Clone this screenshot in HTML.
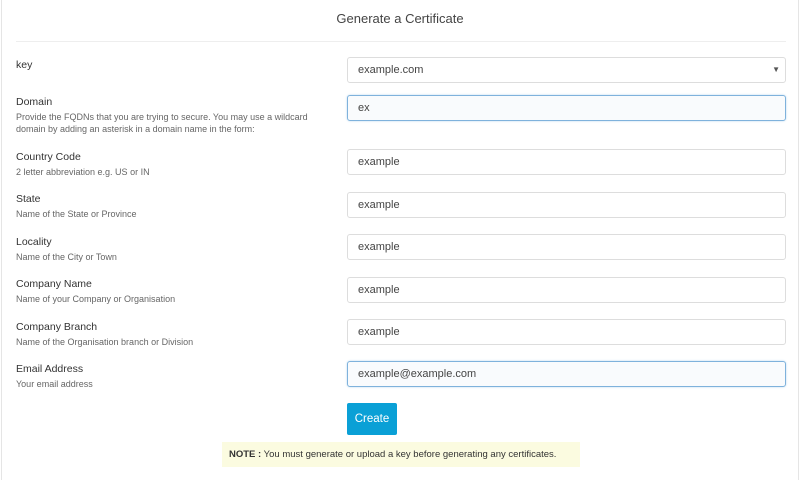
<!DOCTYPE html><html><head><style>
body{margin:0;width:800px;height:472px;background:#fff;font-family:"Liberation Sans",sans-serif;position:relative;overflow:hidden;color:#333}
.frame{position:absolute;left:1px;top:0;width:796px;height:480px;border-left:1px solid #e5e5e5;border-right:1px solid #e5e5e5}
.title{position:absolute;top:11px;left:0;width:800px;text-align:center;font-size:13px;color:#444}
.hr{position:absolute;top:41px;left:16px;width:770px;border-top:1px solid #eee}
.l{position:absolute;left:16px;font-size:10.5px;color:#333}
.d{position:absolute;left:16px;font-size:9px;color:#666;line-height:12px;width:320px}
.i{position:absolute;left:347px;height:24px;border:1px solid #ddd;border-radius:3px;font-size:11px;line-height:24px;padding-left:10px;box-sizing:content-box;width:427px;color:#444}
.f{border-color:#7fb2dc;background:#f9fbfd;box-shadow:0 0 2px #bcd8ee}
.btn{position:absolute;left:347px;top:403px;width:50px;height:32px;background:#0aa0d6;border-radius:2px;color:#fff;font-size:11.5px;line-height:32px;text-align:center}
.note{position:absolute;left:222px;top:442px;width:358px;height:25px;background:#fbfbe0;font-size:9.5px;line-height:25px;text-indent:7px;color:#333}
</style></head><body>
<div class="frame"></div>
<div class="title">Generate a Certificate</div>
<div class="hr"></div>
<div class="l" style="top:59px">key</div>
<div class="i" style="top:57px">example.com<span style="position:absolute;right:5px;font-size:8px;color:#555">▼</span></div>
<div class="l" style="top:96px">Domain</div>
<div class="d" style="top:111px">Provide the FQDNs that you are trying to secure. You may use a wildcard domain by adding an asterisk in a domain name in the form:</div>
<div class="i f" style="top:95px">ex</div>
<div class="l" style="top:151px">Country Code</div><div class="d" style="top:166px">2 letter abbreviation e.g. US or IN</div>
<div class="i" style="top:149px">example</div>
<div class="l" style="top:193px">State</div><div class="d" style="top:208px">Name of the State or Province</div>
<div class="i" style="top:192px">example</div>
<div class="l" style="top:236px">Locality</div><div class="d" style="top:251px">Name of the City or Town</div>
<div class="i" style="top:234px">example</div>
<div class="l" style="top:278px">Company Name</div><div class="d" style="top:293px">Name of your Company or Organisation</div>
<div class="i" style="top:277px">example</div>
<div class="l" style="top:321px">Company Branch</div><div class="d" style="top:336px">Name of the Organisation branch or Division</div>
<div class="i" style="top:319px">example</div>
<div class="l" style="top:363px">Email Address</div><div class="d" style="top:378px">Your email address</div>
<div class="i f" style="top:361px">example@example.com</div>
<div class="btn">Create</div>
<div class="note"><b>NOTE :</b> You must generate or upload a key before generating any certificates.</div>
</body></html>
